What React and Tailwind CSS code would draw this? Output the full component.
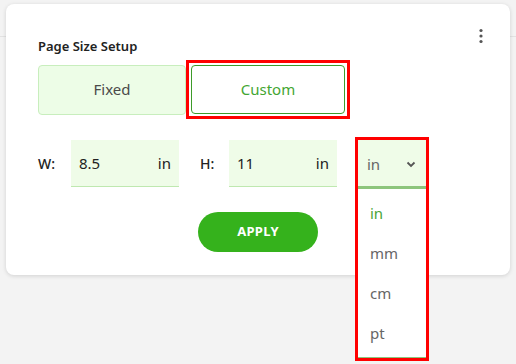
import React, { useState } from "react";

const units = ["in", "mm", "cm", "pt"];

const Kebab = () => (
  <svg width="6" height="16" viewBox="0 0 6 16" className="text-[#555]">
    <circle cx="3" cy="2.5" r="1.6" fill="currentColor" />
    <circle cx="3" cy="8" r="1.6" fill="currentColor" />
    <circle cx="3" cy="13.5" r="1.6" fill="currentColor" />
  </svg>
);

const Chevron = () => (
  <svg width="10" height="7" viewBox="0 0 10 7" className="text-[#555]">
    <polyline points="1.5,1.5 5,5 8.5,1.5" fill="none" stroke="currentColor" strokeWidth="1.8" />
  </svg>
);

const SizeInput = ({ label, value, labelWidth }) => (
  <div className="flex items-center">
    <span className={`${labelWidth} text-[14px] font-medium text-[#222]`}>{label}</span>
    <div className="flex h-[47px] w-[108px] items-center justify-between border-b border-[#bfe8b0] bg-[#effce8] px-2 text-[15px] text-[#222]">
      <span>{value}</span>
      <span>in</span>
    </div>
  </div>
);

export default function App() {
  const [mode, setMode] = useState("custom");
  const [unit, setUnit] = useState("in");

  return (
    <div className="min-h-[364px] bg-[#f3f3f3] pb-[40px] font-['Noto_Sans',sans-serif]">
      {/* header strip behind the card */}
      <div className="h-[37px] border-b border-[#e2e2e2]" />

      <div className="relative z-10 ml-[6px] -mt-[33px] h-[271px] w-[504px] rounded-lg bg-white pl-[32px] pr-[28px] pt-[33px] shadow-[0_1px_4px_rgba(0,0,0,0.14)]">
        <div className="flex items-start justify-between">
          <h2 className="text-[13px] font-semibold leading-[18px] text-[#222]">Page Size Setup</h2>
          <div className="-mt-[9px] mr-[-2px]">
            <Kebab />
          </div>
        </div>

        {/* mode toggle */}
        <div className="mt-[5px] flex items-center">
          <button
            onClick={() => setMode("fixed")}
            className="h-[50px] w-[148px] rounded border border-[#c8eebd] bg-[#edfde7] text-[15px] text-[#4a4a4a]"
          >
            Fixed
          </button>
          <div className="border-[3px] border-[#ff0000] p-[2px]">
            <button
              onClick={() => setMode("custom")}
              className="h-[49px] w-[154px] rounded border border-[#3e9b2a] bg-white text-[15px] text-[#43a632]"
            >
              Custom
            </button>
          </div>
        </div>

        {/* size inputs */}
        <div className="mt-[18px] flex items-start">
          <div className="mt-[3px] flex items-center gap-[21px]">
            <SizeInput label="W:" value="8.5" labelWidth="w-[33px]" />
            <SizeInput label="H:" value="11" labelWidth="w-[29px]" />
          </div>

          <div className="relative ml-[18px] border-x-[3px] border-t-[3px] border-[#ff0000]">
            <div className="flex h-[49px] w-[68px] items-center justify-between border-b-[3px] border-[#8dc57c] bg-[#effce8] pl-[9px] pr-[10px] pt-[2px] text-[15px] text-[#666]">
              <span>{unit}</span>
              <Chevron />
            </div>
            <ul className="absolute left-[-3px] right-[-3px] top-full h-[172px] border-x-[3px] border-b-[3px] border-[#ff0000] bg-white">
              <div className="h-full border-b border-[#8dc57c] pt-[12px]">
                {units.map((u) => (
                  <li
                    key={u}
                    onClick={() => setUnit(u)}
                    className={`h-[40px] pl-[12px] text-[15px] leading-[24px] ${u === unit ? "text-[#4aa537]" : "text-[#666]"}`}
                  >
                    {u}
                  </li>
                ))}
              </div>
            </ul>
          </div>
        </div>

        {/* apply */}
        <div className="mt-[23px] flex justify-center pr-[4px]">
          <button className="h-[40px] w-[120px] rounded-full bg-[#35b21c] text-[13px] font-bold tracking-[0.3px] text-white">
            APPLY
          </button>
        </div>
      </div>
    </div>
  );
}
